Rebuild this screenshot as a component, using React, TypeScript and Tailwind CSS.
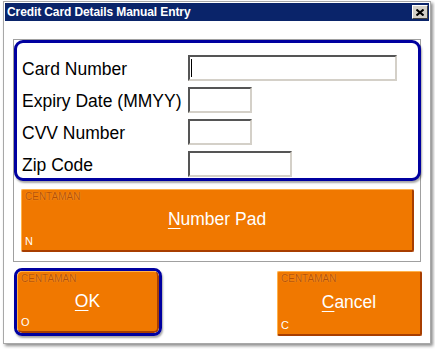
import type { ReactNode } from "react";

function Field({ w, caret }: { w: string; caret?: boolean }) {
  return (
    <div className={`${w} h-[26px] bg-white border-2 border-t-[#555555] border-l-[#555555] border-b-[#d4d0c8] border-r-[#d4d0c8] flex items-center pl-[1px]`}>
      {caret && <div className="w-px h-[18px] bg-black" />}
    </div>
  );
}

function OrangeButton({ children, hotkey, className }: { children: ReactNode; hotkey: string; className: string }) {
  return (
    <div className={`relative bg-[#f07800] border-t border-l border-t-[#ffb24a] border-l-[#ffb24a] border-b-2 border-r-2 border-b-[#a83e00] border-r-[#a83e00] rounded-[2px] flex items-center justify-center ${className}`}>
      <span className="absolute left-[3px] top-[2px] text-[10px] leading-none text-[#b85000] [text-shadow:0_0_1px_rgba(255,190,90,0.9)]">CENTAMAN</span>
      <span className="text-[17.5px] leading-none text-white">{children}</span>
      <span className="absolute left-[3px] bottom-[3px] text-[11px] leading-none text-white">{hotkey}</span>
    </div>
  );
}

export default function App() {
  const labels = ["Card Number", "Expiry Date (MMYY)", "CVV Number", "Zip Code"];
  const widths = ["w-[209px]", "w-[64px]", "w-[64px]", "w-[104px]"];

  return (
    <div className="w-[435px] h-[349px] bg-white pt-px pl-[3px] font-['Liberation_Sans',Arial,sans-serif]">
      <div className="w-[428px] h-[343px] border border-[#a8a8a8] p-px bg-white shadow-[2px_2px_3px_rgba(0,0,0,0.45)] flex flex-col">
        <div className="h-[18px] bg-[#0a246a] flex items-center justify-between pl-[2px] pr-[1px]">
          <span className="text-white font-bold text-[12px] leading-none tracking-[-0.1px]">Credit Card Details Manual Entry</span>
          <div className="w-[16px] h-[14px] bg-[#d4d0c8] border border-t-white border-l-white border-b-[#404040] border-r-[#404040] flex items-center justify-center">
            <svg width="8" height="7" viewBox="0 0 8 7">
              <path d="M0.5 0.5 L7.5 6.5 M7.5 0.5 L0.5 6.5" stroke="black" strokeWidth="2" />
            </svg>
          </div>
        </div>

        <div className="ml-[8px] mt-[18px] w-[408px] h-[223px] border border-[#a0a0a0] flex flex-col">
          <div className="w-[407px] h-[141px] rounded-[9px] border-[3px] border-[#0000a0] bg-white shadow-[1px_2px_2px_rgba(0,0,0,0.35)] pl-[5px] pt-[12px]">
            <div className="grid grid-cols-[166px_auto] gap-y-[6px]">
              {labels.map((l, i) => (
                <div key={l} className="contents">
                  <div className="h-[26px] flex items-center pt-[4px] text-[17.5px] leading-none text-black whitespace-nowrap">{l}</div>
                  <Field w={widths[i]} caret={i === 0} />
                </div>
              ))}
            </div>
          </div>
          <OrangeButton hotkey="N" className="mt-[8px] ml-[7px] w-[393px] h-[63px]">
            <span className="underline underline-offset-[3px]">N</span>umber Pad
          </OrangeButton>
        </div>

        <div className="flex items-end justify-between mt-[6px] ml-[9px] mr-[7px]">
          <div className="w-[148px] h-[68px] rounded-[8px] border-[3px] border-[#0000a0] shadow-[1px_2px_2px_rgba(0,0,0,0.35)] overflow-hidden flex">
            <OrangeButton hotkey="O" className="flex-1 rounded-[5px]">
              <span className="underline underline-offset-[3px]">O</span>K
            </OrangeButton>
          </div>
          <OrangeButton hotkey="C" className="w-[145px] h-[65px]">
            <span className="underline underline-offset-[3px]">C</span>ancel
          </OrangeButton>
        </div>
      </div>
    </div>
  );
}
